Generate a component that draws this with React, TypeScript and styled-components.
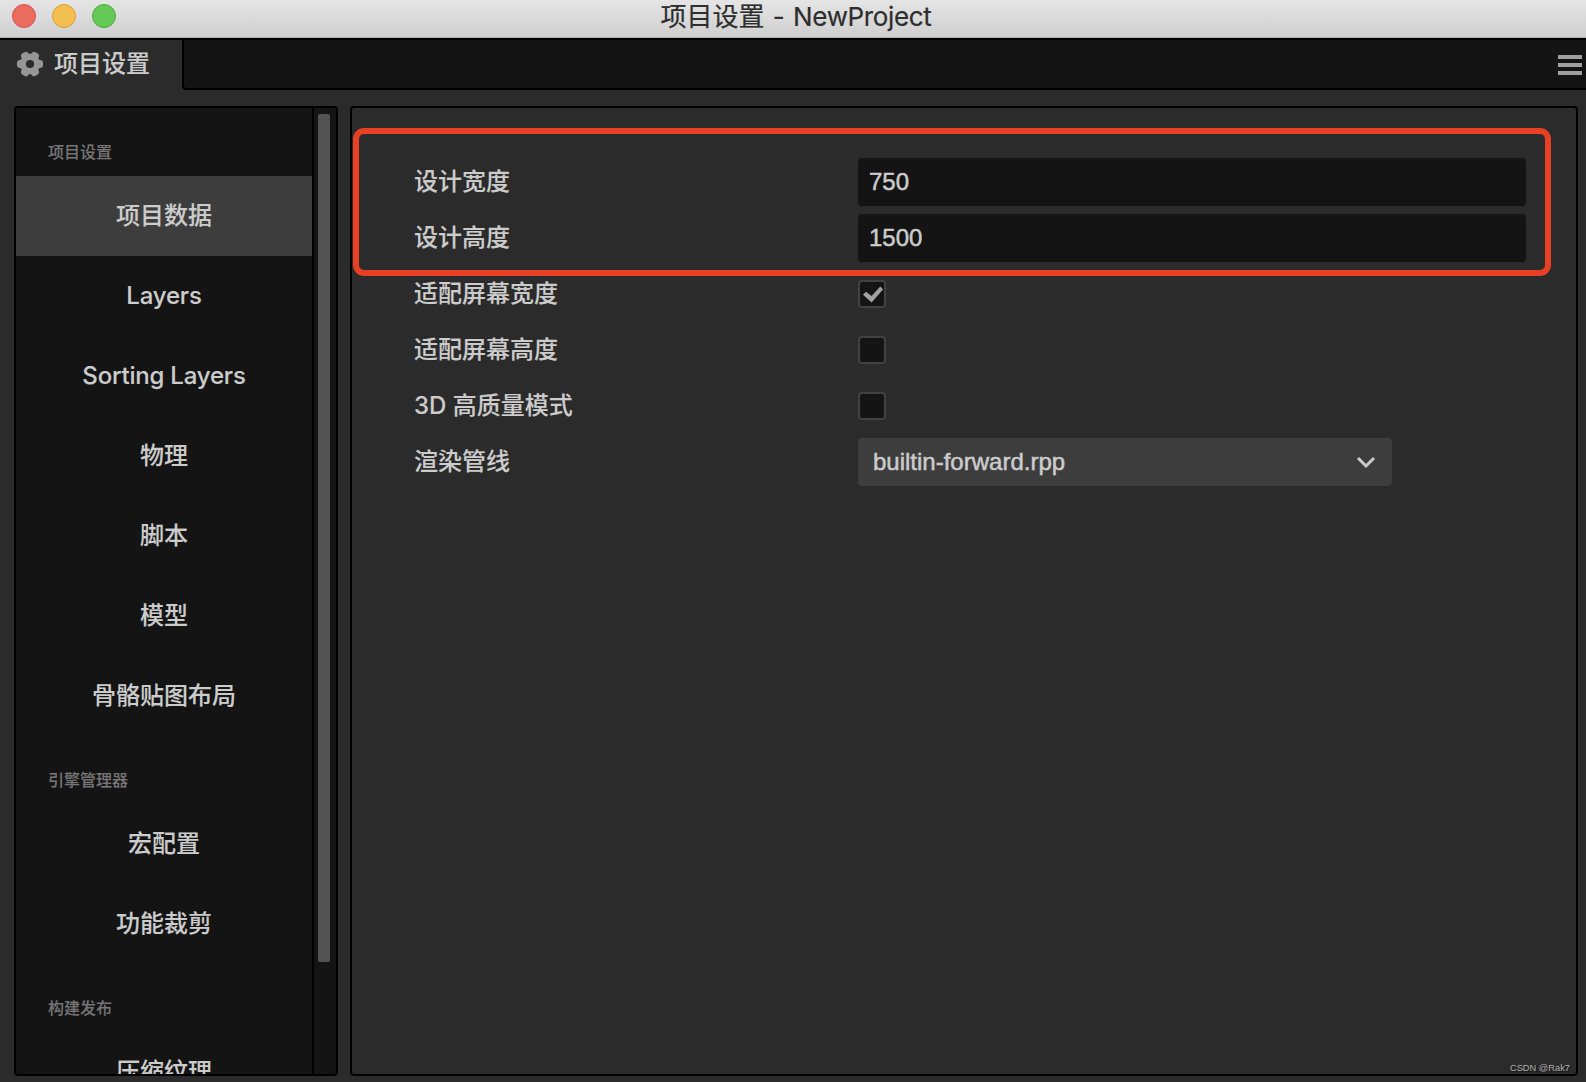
import React from "react";
import styled, { createGlobalStyle } from "styled-components";

const GlobalStyle = createGlobalStyle`
  *, *::before, *::after { box-sizing: border-box; }
  html, body { margin: 0; padding: 0; background: #2b2b2b; }
`;

const uiFont = `Inter, "Noto Sans CJK SC", sans-serif`;
const fieldFont = `"Liberation Sans", Arial, "Noto Sans CJK SC", sans-serif`;

const Window = styled.div`
  display: flex;
  flex-direction: column;
  width: 1586px;
  height: 1082px;
  overflow: hidden;
  position: relative;
  background: #2b2b2b;
  color: #cccccc;
  font-family: ${uiFont};
  font-size: 24px;
  font-weight: 500;
  -webkit-text-stroke: 0.12px currentColor;
`;

const TitleBar = styled.header`
  display: grid;
  grid-template-columns: 1fr auto 1fr;
  flex: none;
  height: 38px;
  padding: 0 12px;
  background: linear-gradient(#e5e5e5, #cfcfcf);
  border-bottom: 1px solid #adadad;
`;

const TrafficLights = styled.div`
  display: flex;
  gap: 16px;
  padding-top: 4px;
`;

const Light = styled.span<{ $fill: string; $edge: string }>`
  width: 24px;
  height: 24px;
  border-radius: 50%;
  background: ${(p) => p.$fill};
  border: 1px solid ${(p) => p.$edge};
`;

const Title = styled.h1`
  margin: 0;
  padding-left: 6px;
  font-size: 26px;
  font-weight: 400;
  line-height: 34px;
  color: #2e2e2e;
  white-space: pre;
  word-spacing: 1px;
  -webkit-text-stroke: 0.2px currentColor;
`;

const ProjectName = styled.span`
  letter-spacing: -0.35px;
`;

const TabBar = styled.nav`
  display: flex;
  flex: none;
  height: 52px;
  border-top: 2px solid #000;
`;

const Tab = styled.div`
  display: flex;
  align-items: center;
  gap: 11px;
  width: 182px;
  padding: 0 0 2px 17px;
`;

const TabText = styled.span`
  line-height: 36px;
`;

const TabSpace = styled.div`
  display: flex;
  flex: 1;
  justify-content: flex-end;
  padding: 15px 4px 0 0;
  background: #141414;
  border-left: 2px solid #000;
  border-bottom: 2px solid #000;
  border-bottom-left-radius: 4px;
`;

const MenuButton = styled.button`
  display: flex;
  flex-direction: column;
  gap: 4px;
  width: 24px;
  padding: 0;
  border: 0;
  background: none;
`;

const MenuLine = styled.span`
  height: 4px;
  background: #a0a0a0;
`;

const Body = styled.div`
  display: flex;
  flex: 1;
  gap: 12px;
  min-height: 0;
  padding: 16px 8px 6px 14px;
`;

const Sidebar = styled.aside`
  display: flex;
  width: 324px;
  border: 2px solid #000;
  border-radius: 4px;
  background: #141414;
  overflow: hidden;
`;

const List = styled.div`
  width: 296px;
  overflow: hidden;
`;

const GroupLabel = styled.div`
  height: 68px;
  padding: 32px 0 0 32px;
  font-size: 16px;
  line-height: 24px;
  color: #757575;
`;

const Item = styled.div<{ $active?: boolean; $latin?: boolean }>`
  display: flex;
  align-items: center;
  justify-content: center;
  height: 80px;
  line-height: 36px;
  letter-spacing: ${(p) => (p.$latin ? "-0.2px" : "0")};
  background: ${(p) => (p.$active ? "#3d3d3d" : "transparent")};
`;

const ScrollTrack = styled.div`
  flex: 1;
  padding: 6px 0 0 4px;
  border-left: 2px solid #000;
`;

const ScrollThumb = styled.div`
  width: 12px;
  height: 848px;
  border-radius: 2px;
  background: #535353;
`;

const Panel = styled.main`
  position: relative;
  display: flex;
  flex: 1;
  flex-direction: column;
  gap: 8px;
  padding: 50px 50px 0 62px;
  border: 2px solid #000;
  border-radius: 4px;
`;

const Row = styled.div`
  display: grid;
  grid-template-columns: 444px 1fr;
  align-items: center;
  height: 48px;
`;

const Label = styled.label`
  line-height: 36px;
`;

const Input = styled.input`
  width: 100%;
  height: 48px;
  padding: 0 0 0 11px;
  border: 0;
  outline: 0;
  border-radius: 4px;
  background: #141414;
  color: #cccccc;
  font: 400 24px ${fieldFont};
  -webkit-text-stroke: 0.5px #cccccc;
`;

const Checkbox = styled.span`
  display: flex;
  align-items: center;
  justify-content: center;
  width: 28px;
  height: 28px;
  border: 2px solid #424242;
  border-radius: 4px;
  background: #141414;
`;

const Select = styled.div`
  display: flex;
  align-items: center;
  justify-content: space-between;
  width: 534px;
  height: 48px;
  padding: 0 16px 0 15px;
  border-radius: 4px;
  background: #3d3d3d;
  font: 400 24px ${fieldFont};
  -webkit-text-stroke: 0.5px #cccccc;
`;

const Highlight = styled.div`
  position: absolute;
  left: 1px;
  top: 20px;
  width: 1198px;
  height: 148px;
  border: 6px solid #e93f24;
  border-radius: 11px;
  pointer-events: none;
`;

const Watermark = styled.span`
  position: absolute;
  right: 16px;
  bottom: 8px;
  font: 400 9.3px/12px ${fieldFont};
  color: #b4b4b4;
  text-shadow: 1px 1px 1px #111;
  -webkit-text-stroke: 0;
`;

const Gear = () => (
  <svg width="26" height="26" viewBox="0 0 26 26">
    <g fill="#969696">
      <circle cx="13" cy="13" r="10.2" />
      {[0, 60, 120].map((angle) => (
        <rect key={angle} x="0" y="8.9" width="26" height="8.2" rx="3" transform={`rotate(${angle} 13 13)`} />
      ))}
    </g>
    <circle cx="13" cy="13" r="4.1" fill="#2b2b2b" />
  </svg>
);

const Check = () => (
  <svg width="24" height="24" viewBox="0 0 24 24">
    <path d="M3 12.7 L6 9.7 L11.6 14 L20.3 4.6 L23 7.6 L11.6 20.5 Z" fill="#a0a0a0" />
  </svg>
);

const Chevron = () => (
  <svg width="20" height="14" viewBox="0 0 20 14">
    <path d="M2 3 L10 11 L18 3" fill="none" stroke="#cccccc" strokeWidth="3" />
  </svg>
);

const groups = [
  {
    label: "项目设置",
    items: ["项目数据", "Layers", "Sorting Layers", "物理", "脚本", "模型", "骨骼贴图布局"],
  },
  { label: "引擎管理器", items: ["宏配置", "功能裁剪"] },
  { label: "构建发布", items: ["压缩纹理"] },
];

const sizes = [
  { label: "设计宽度", value: "750" },
  { label: "设计高度", value: "1500" },
];

const toggles = [
  { label: "适配屏幕宽度", on: true },
  { label: "适配屏幕高度", on: false },
  { label: "3D 高质量模式", on: false },
];

export default function App() {
  return (
    <>
      <GlobalStyle />
      <Window>
        <TitleBar>
          <TrafficLights>
            <Light $fill="#ec6b5f" $edge="#d5534a" />
            <Light $fill="#f4bf4f" $edge="#d8a03c" />
            <Light $fill="#64c956" $edge="#4ea73d" />
          </TrafficLights>
          <Title>
            项目设置 - <ProjectName>NewProject</ProjectName>
          </Title>
        </TitleBar>
        <TabBar>
          <Tab>
            <Gear />
            <TabText>项目设置</TabText>
          </Tab>
          <TabSpace>
            <MenuButton>
              <MenuLine />
              <MenuLine />
              <MenuLine />
            </MenuButton>
          </TabSpace>
        </TabBar>
        <Body>
          <Sidebar>
            <List>
              {groups.map((group) => (
                <React.Fragment key={group.label}>
                  <GroupLabel>{group.label}</GroupLabel>
                  {group.items.map((item) => (
                    <Item key={item} $active={item === "项目数据"} $latin={/^[A-Z]/.test(item)}>
                      {item}
                    </Item>
                  ))}
                </React.Fragment>
              ))}
            </List>
            <ScrollTrack>
              <ScrollThumb />
            </ScrollTrack>
          </Sidebar>
          <Panel>
            {sizes.map((row) => (
              <Row key={row.label}>
                <Label>{row.label}</Label>
                <Input defaultValue={row.value} />
              </Row>
            ))}
            {toggles.map((row) => (
              <Row key={row.label}>
                <Label>{row.label}</Label>
                <Checkbox>{row.on && <Check />}</Checkbox>
              </Row>
            ))}
            <Row>
              <Label>渲染管线</Label>
              <Select>
                builtin-forward.rpp
                <Chevron />
              </Select>
            </Row>
            <Highlight />
          </Panel>
        </Body>
        <Watermark>CSDN @Rak7</Watermark>
      </Window>
    </>
  );
}
